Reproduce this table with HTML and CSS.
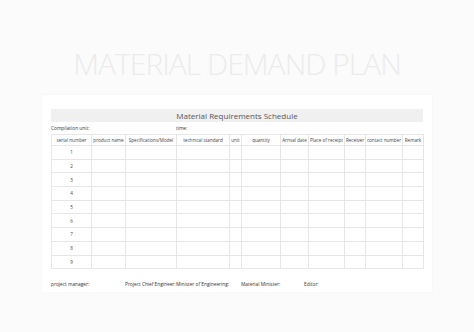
FILE: index.html
```html
<!DOCTYPE html>
<html>
<head>
<meta charset="utf-8">
<link rel="stylesheet" href="styles.css">
</head>
<body>
<div class="page">
  <h1 class="hero">MATERIAL DEMAND PLAN</h1>
  <div class="card">
    <div class="sheet-title">Material Requirements Schedule</div>
    <div class="meta">
      <span class="meta-unit">Compilation unit:</span>
      <span class="meta-time">time:</span>
    </div>
    <table class="grid">
      <colgroup>
        <col style="width:40px"><col style="width:34px"><col style="width:51px"><col style="width:53px"><col style="width:12px"><col style="width:39px"><col style="width:28px"><col style="width:36px"><col style="width:21px"><col style="width:37px"><col style="width:21px">
      </colgroup>
      <thead>
        <tr><th>serial number</th><th>product name</th><th>Specifications/Model</th><th>technical standard</th><th>unit</th><th>quantity</th><th>Arrival date</th><th>Place of receipt</th><th>Receiver</th><th>contact number</th><th>Remark</th></tr>
      </thead>
      <tbody>
        <tr><td>1</td><td></td><td></td><td></td><td></td><td></td><td></td><td></td><td></td><td></td><td></td></tr>
        <tr><td>2</td><td></td><td></td><td></td><td></td><td></td><td></td><td></td><td></td><td></td><td></td></tr>
        <tr><td>3</td><td></td><td></td><td></td><td></td><td></td><td></td><td></td><td></td><td></td><td></td></tr>
        <tr><td>4</td><td></td><td></td><td></td><td></td><td></td><td></td><td></td><td></td><td></td><td></td></tr>
        <tr><td>5</td><td></td><td></td><td></td><td></td><td></td><td></td><td></td><td></td><td></td><td></td></tr>
        <tr><td>6</td><td></td><td></td><td></td><td></td><td></td><td></td><td></td><td></td><td></td><td></td></tr>
        <tr><td>7</td><td></td><td></td><td></td><td></td><td></td><td></td><td></td><td></td><td></td><td></td></tr>
        <tr><td>8</td><td></td><td></td><td></td><td></td><td></td><td></td><td></td><td></td><td></td><td></td></tr>
        <tr><td>9</td><td></td><td></td><td></td><td></td><td></td><td></td><td></td><td></td><td></td><td></td></tr>
      </tbody>
    </table>
    <div class="signs">
      <span class="s1">project manager:</span>
      <span class="s2">Project Chief Engineer:</span>
      <span class="s3">Minister of Engineering:</span>
      <span class="s4">Material Minister:</span>
      <span class="s5">Editor:</span>
    </div>
  </div>
</div>
</body>
</html>
```
FILE: styles.css
```css
* { box-sizing: border-box; }
html, body { margin: 0; padding: 0; }
body {
  width: 474px;
  height: 332px;
  background: #fbfbfb;
  font-family: "Open Sans", "Noto Sans", sans-serif;
  overflow: hidden;
}
.page {
  padding-top: 44px;
}
.hero {
  margin: 0;
  height: 51px;
  font-weight: 300;
  font-size: 30px;
  line-height: 40px;
  text-align: center;
  color: #ebebeb;
  letter-spacing: -1px;
}
.card {
  margin-left: 42px;
  width: 390px;
  height: 197px;
  background: #ffffff;
  padding: 14px 9px 0 9px;
  box-shadow: 0 0 2px rgba(0,0,0,0.04);
}
.sheet-title {
  width: 372px;
  height: 13px;
  background: #f0f0f0;
  font-size: 8px;
  line-height: 13px;
  text-align: center;
  color: #555;
}
.meta {
  display: flex;
  height: 12px;
  align-items: center;
  font-size: 4.8px;
  color: #333;
}
.meta-unit { width: 125px; }
.grid {
  width: 372px;
  table-layout: fixed;
  border-collapse: collapse;
  font-size: 4.6px;
  color: #444;
}
.grid th, .grid td {
  border: 1px solid #e6e6e6;
  padding: 0;
  text-align: center;
  font-weight: 400;
  white-space: nowrap;
  overflow: hidden;
}
.grid th { height: 11px; }
.grid td { height: 13.7px; }
.signs {
  display: flex;
  height: 30px;
  align-items: center;
  font-size: 4.8px;
  color: #333;
}
.s1 { width: 74px; }
.s2 { width: 51px; }
.s3 { width: 65px; }
.s4 { width: 63px; }
```
